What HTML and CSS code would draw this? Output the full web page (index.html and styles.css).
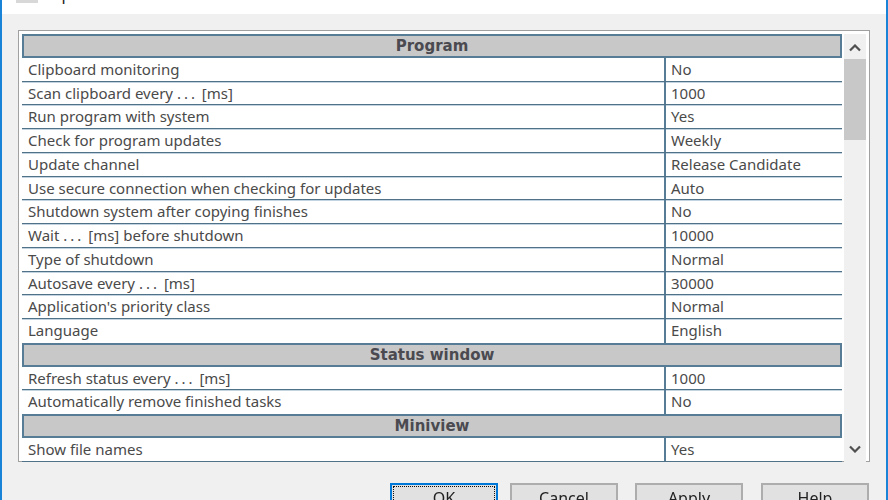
FILE: index.html
```html
<!DOCTYPE html>
<html lang="en">
  <head>
    <meta charset="UTF-8" />
    <title>Options</title>
    <link rel="stylesheet" href="styles.css">
  </head>
  <body>
    <div id="main">
      <div class="titlebar">
        <span class="title-icon"></span>
        <span class="title-text">Options</span>
      </div>
      <div class="content">
        <div class="grid-box">
          <div class="grid">
            <div class="group">Program</div>
            <div class="row"><div class="name">Clipboard monitoring</div><div class="value">No</div></div>
            <div class="row"><div class="name">Scan clipboard every <span class="dots">...</span> [ms]</div><div class="value">1000</div></div>
            <div class="row"><div class="name">Run program with system</div><div class="value">Yes</div></div>
            <div class="row"><div class="name">Check for program updates</div><div class="value">Weekly</div></div>
            <div class="row"><div class="name">Update channel</div><div class="value">Release Candidate</div></div>
            <div class="row"><div class="name">Use secure connection when checking for updates</div><div class="value">Auto</div></div>
            <div class="row"><div class="name">Shutdown system after copying finishes</div><div class="value">No</div></div>
            <div class="row"><div class="name">Wait <span class="dots">...</span> [ms] before shutdown</div><div class="value">10000</div></div>
            <div class="row"><div class="name">Type of shutdown</div><div class="value">Normal</div></div>
            <div class="row"><div class="name">Autosave every <span class="dots">...</span> [ms]</div><div class="value">30000</div></div>
            <div class="row"><div class="name">Application's priority class</div><div class="value">Normal</div></div>
            <div class="row"><div class="name">Language</div><div class="value">English</div></div>
            <div class="group">Status window</div>
            <div class="row"><div class="name">Refresh status every <span class="dots">...</span> [ms]</div><div class="value">1000</div></div>
            <div class="row"><div class="name">Automatically remove finished tasks</div><div class="value">No</div></div>
            <div class="group">Miniview</div>
            <div class="row"><div class="name">Show file names</div><div class="value">Yes</div></div>
          </div>
          <div class="scrollbar">
            <div class="arrow up">
              <svg width="12" height="8" viewBox="0 0 12 8"><path d="M1 6.5 L6 1.5 L11 6.5" fill="none" stroke="#505050" stroke-width="2.2"/></svg>
            </div>
            <div class="track"><div class="thumb"></div></div>
            <div class="arrow down">
              <svg width="12" height="8" viewBox="0 0 12 8"><path d="M1 1.5 L6 6.5 L11 1.5" fill="none" stroke="#505050" stroke-width="2.2"/></svg>
            </div>
          </div>
        </div>
        <div class="buttons">
          <button class="btn default"><span>OK</span></button>
          <button class="btn">Cancel</button>
          <button class="btn">Apply</button>
          <button class="btn">Help</button>
        </div>
      </div>
    </div>
  </body>
</html>
```

FILE: styles.css
```css
* {
  margin: 0;
  padding: 0;
  box-sizing: border-box;
}
html,
body {
  height: 500px;
  overflow: hidden;
}
body {
  font-family: "Noto Sans", sans-serif;
  font-size: 15px;
  color: #4a4a4a;
}
#main {
  height: 500px;
  display: flex;
  flex-direction: column;
  background-color: #f0f0f0;
  border-left: 2px solid #1883d7;
  border-right: 2px solid #1883d7;
  filter: blur(0.3px);
}
.titlebar {
  height: 14px;
  flex-shrink: 0;
  display: flex;
  align-items: flex-end;
  gap: 11px;
  padding-left: 14px;
  background-color: white;
  overflow: hidden;
}
.title-icon {
  width: 22px;
  height: 3px;
  flex-shrink: 0;
  margin-bottom: 11px;
  background-color: #d8d8d8;
}
.title-text {
  font-size: 16px;
  line-height: 22px;
  margin-bottom: 9px;
  color: #222;
}
.content {
  padding: 16px 16px 0 16px;
}
.grid-box {
  width: 852px;
  height: 432px;
  display: flex;
  background-color: white;
  border: 1px solid #a0a0a0;
  padding: 3px 3px 0 3px;
}
.grid {
  width: 821px;
  height: 428px;
  overflow: hidden;
}
.group {
  height: 23.75px;
  line-height: 20px;
  text-align: center;
  font-family: "DejaVu Sans", sans-serif;
  font-size: 15px;
  font-weight: bold;
  color: #4a4a50;
  background-color: #c8c8c8;
  border: 2px solid #567c96;
}
.row {
  height: 23.75px;
  display: flex;
  line-height: 22px;
  border-bottom: 1px solid #4f7288;
  box-shadow: 0 1px 0 #c3d4e0;
}
.row:has(+ .group) {
  border-bottom: none;
  box-shadow: none;
}
.name {
  width: 644px;
  padding-left: 6px;
  border-right: 2px solid #567c96;
  white-space: nowrap;
}
.dots {
  letter-spacing: 3px;
}
.value {
  flex: 1;
  padding-left: 5px;
  white-space: nowrap;
}
.scrollbar {
  width: 22px;
  margin-left: 2px;
  display: flex;
  flex-direction: column;
  background-color: #f0f0f0;
  height: 428px;
}
.arrow {
  height: 25px;
  display: flex;
  align-items: center;
  justify-content: center;
}
.arrow.up {
  padding-top: 2px;
}
.arrow.down {
  padding-bottom: 2px;
}
.track {
  flex: 1;
}
.thumb {
  height: 81px;
  background-color: #c8c8c8;
}
.buttons {
  display: flex;
  margin-top: 21px;
  margin-left: 372px;
  gap: 12px;
}
.btn {
  width: 108px;
  height: 32px;
  flex-shrink: 0;
  padding-bottom: 3px;
  font-family: "Noto Sans", sans-serif;
  font-size: 16px;
  color: #222;
  background-color: #e1e1e1;
  border: 2px solid #adadad;
}
.btn:nth-child(3) {
  margin-left: 5px;
}
.btn:nth-child(4) {
  margin-left: 6px;
}
.default {
  border: 2px solid #0078d7;
  padding: 1px;
}
.default span {
  display: block;
  height: 100%;
  border: 1px dotted #111;
}
```
